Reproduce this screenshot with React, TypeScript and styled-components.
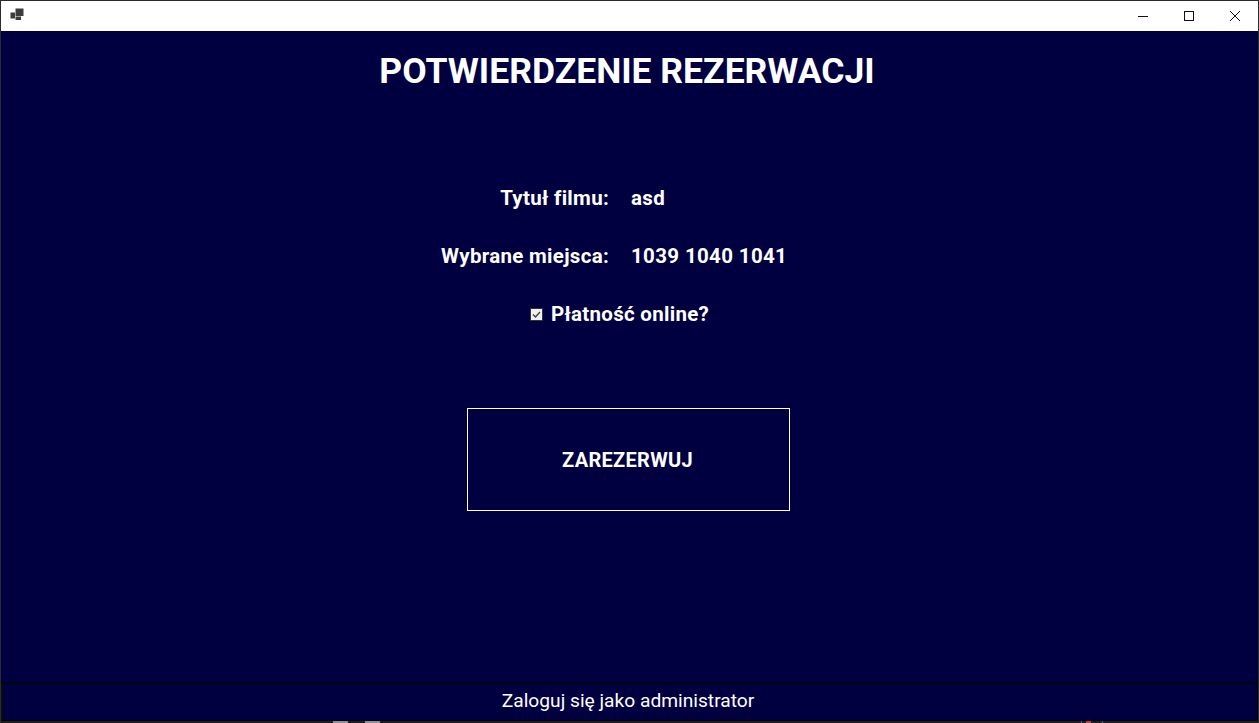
import React, { useState } from 'react'
import styled, { createGlobalStyle } from 'styled-components'

const GlobalStyle = createGlobalStyle`
  html, body {
    margin: 0;
    padding: 0;
    height: 100%;
    overflow: hidden;
    background: #000040;
  }
  #root {
    height: 100%;
  }
`

const Window = styled.div`
  box-sizing: border-box;
  width: 1259px;
  height: 723px;
  display: flex;
  flex-direction: column;
  border: 1px solid #2b2b2b;
  border-bottom: 0;
  background: #000040;
  color: #fff;
  font-family: Roboto, 'Liberation Sans', sans-serif;
  font-variant-ligatures: none;
`

const TitleBar = styled.div`
  height: 30px;
  flex: none;
  display: flex;
  align-items: center;
  justify-content: space-between;
  background: #fff;
`

const AppIcon = styled.svg`
  width: 14px;
  height: 14px;
  margin-left: 9px;
  margin-bottom: 3px;
`

const WindowControls = styled.div`
  display: flex;
  height: 100%;
`

const ControlButton = styled.div`
  width: 46px;
  height: 100%;
  display: flex;
  align-items: center;
  justify-content: center;
  svg {
    width: 10px;
    height: 10px;
    display: block;
  }
`

const Content = styled.main`
  flex: 1;
  display: flex;
  flex-direction: column;
  align-items: center;
  padding-right: 2px;
`

const Heading = styled.h1`
  margin: 20px 3px 0 0;
  font-size: 35.5px;
  line-height: 40px;
  font-weight: 700;
  white-space: nowrap;
`

const Form = styled.div`
  margin-top: 95px;
  display: grid;
  grid-template-columns: 300px 300px;
  column-gap: 22px;
  row-gap: 34px;
  padding-right: 17px;
`

const Label = styled.div`
  font-size: 20.5px;
  line-height: 24px;
  font-weight: 700;
  letter-spacing: 0.3px;
  text-align: right;
`

const Value = styled.div`
  font-size: 20.5px;
  line-height: 24px;
  font-weight: 700;
  letter-spacing: 0.35px;
`

const CheckRow = styled.label`
  grid-column: 1 / -1;
  display: flex;
  align-items: center;
  justify-content: center;
  gap: 8px;
  font-size: 20.5px;
  line-height: 24px;
  font-weight: 700;
  letter-spacing: 0.3px;
  padding-right: 1px;
`

const CheckBox = styled.span`
  width: 13px;
  height: 13px;
  display: block;
  svg {
    display: block;
    width: 13px;
    height: 13px;
  }
`

const ReserveButton = styled.button`
  margin-top: 82px;
  width: 323px;
  height: 103px;
  box-sizing: border-box;
  background: transparent;
  border: 1px solid #fff;
  color: #fff;
  font-family: inherit;
  font-size: 20px;
  font-weight: 700;
  letter-spacing: 0.3px;
  padding: 0 2px 0 0;
  cursor: pointer;
`

const AdminBar = styled.div`
  flex: none;
  box-sizing: border-box;
  height: 39px;
  display: flex;
  align-items: center;
  justify-content: center;
  border: 1px solid #04040f;
  border-top-width: 2px;
  border-left: 2px solid #0a0a14;
  font-size: 19.2px;
  color: #fff;
  padding: 0 4px 3px 0;
`

const BottomEdge = styled.div`
  flex: none;
  height: 2px;
  display: flex;
  background: #1c1c1c;
`

const EdgeSpot = styled.span<{ $gap: number; $width: number; $color: string }>`
  margin-left: ${(p) => p.$gap}px;
  width: ${(p) => p.$width}px;
  background: ${(p) => p.$color};
`

const App: React.FC = () => {
  const [online, setOnline] = useState(true)

  return (
    <Window>
      <GlobalStyle />
      <TitleBar>
        <AppIcon viewBox="0 0 14 14">
          <rect x="0.5" y="4.5" width="4.5" height="6" fill="#3c3c3c" />
          <rect x="5.5" y="0.5" width="8" height="7.5" fill="#3c3c3c" />
          <rect x="5.5" y="8.5" width="5.5" height="3.5" fill="#3c3c3c" />
        </AppIcon>
        <WindowControls>
          <ControlButton>
            <svg viewBox="0 0 10 10">
              <path d="M0 5.5h10" stroke="#111" strokeWidth="1" fill="none" />
            </svg>
          </ControlButton>
          <ControlButton>
            <svg viewBox="0 0 10 10">
              <rect x="0.5" y="0.5" width="9" height="9" stroke="#111" strokeWidth="1" fill="none" />
            </svg>
          </ControlButton>
          <ControlButton>
            <svg viewBox="0 0 10 10">
              <path d="M0 0l10 10M10 0L0 10" stroke="#111" strokeWidth="1" fill="none" />
            </svg>
          </ControlButton>
        </WindowControls>
      </TitleBar>
      <Content>
        <Heading>POTWIERDZENIE REZERWACJI</Heading>
        <Form>
          <Label>Tytuł filmu:</Label>
          <Value>asd</Value>
          <Label>Wybrane miejsca:</Label>
          <Value>1039 1040 1041</Value>
          <CheckRow onClick={() => setOnline(!online)}>
            <CheckBox>
              <svg viewBox="0 0 13 13">
                <rect x="0.5" y="0.5" width="12" height="12" fill="#f0f0f0" stroke="#333" />
                {online && <path d="M3 6.5l2.5 2.5L10 4" stroke="#444" strokeWidth="1.5" fill="none" />}
              </svg>
            </CheckBox>
            Płatność online?
          </CheckRow>
        </Form>
        <ReserveButton>ZAREZERWUJ</ReserveButton>
      </Content>
      <AdminBar>Zaloguj się jako administrator</AdminBar>
      <BottomEdge>
        <EdgeSpot $gap={332} $width={15} $color="#8f8f8f" />
        <EdgeSpot $gap={17} $width={15} $color="#8f8f8f" />
        <EdgeSpot $gap={701} $width={1} $color="#5a5aa0" />
        <EdgeSpot $gap={4} $width={5} $color="#b04040" />
        <EdgeSpot $gap={11} $width={1} $color="#5a5aa0" />
      </BottomEdge>
    </Window>
  )
}

export default App
